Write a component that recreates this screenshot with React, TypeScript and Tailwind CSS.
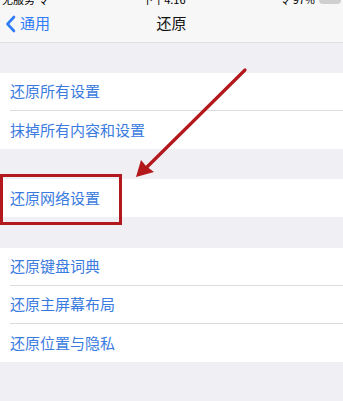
import React from "react";

const font = { fontFamily: '"Noto Sans CJK SC", "Noto Sans", sans-serif' };

const Row = ({ label, last }: { label: string; last?: boolean }) => (
  <div className="pl-[10px] bg-white">
    <div className={`h-[38px] flex items-center text-[15px] text-[#3a7be0] ${last ? "" : "border-b border-[#dcdce0]"}`}>
      {label}
    </div>
  </div>
);

export default function App() {
  return (
    <div className="relative w-[343px] h-[401px] overflow-hidden bg-[#efeff4]" style={font}>
      {/* status bar, cut at top */}
      <div className="h-[5px] overflow-hidden bg-[#f7f7f7] relative">
        <div className="flex justify-between items-end text-[11px] text-black leading-none -mt-[6px] px-[2px]">
          <span>无服务 令</span>
          <span>下午4:16</span>
          <span className="flex items-center gap-1">
            令 97%
            <span className="w-[22px] h-[9px] bg-[#cfcfcf] rounded-sm" />
          </span>
        </div>
      </div>
      {/* nav bar */}
      <div className="h-[38px] bg-[#f7f7f7] border-b border-[#e0e0e4] flex items-center relative">
        <div className="flex items-center pl-[5px] text-[#2f7cf6] text-[15px]">
          <svg width="11" height="18" viewBox="0 0 11 18" className="mr-[4px]">
            <path d="M9 2 L2.5 9 L9 16" fill="none" stroke="#2f7cf6" strokeWidth="2.6" strokeLinecap="round" strokeLinejoin="round" />
          </svg>
          通用
        </div>
        <div className="absolute left-0 right-0 text-center text-[15px] text-[#111] pointer-events-none">还原</div>
      </div>

      <div className="h-[30px]" />
      <Row label="还原所有设置" />
      <Row label="抹掉所有内容和设置" last />
      <div className="h-[30px]" />
      <Row label="还原网络设置" last />
      <div className="h-[31px]" />
      <Row label="还原键盘词典" />
      <Row label="还原主屏幕布局" />
      <Row label="还原位置与隐私" last />

      {/* red highlight box */}
      <div className="absolute left-0 top-[174px] w-[122px] h-[51px] border-[3px] border-[#b3191c]" />
      {/* arrow */}
      <svg className="absolute left-0 top-0" width="343" height="401" viewBox="0 0 343 401">
        <line x1="245" y1="70" x2="146" y2="168" stroke="#b3191c" strokeWidth="3.2" strokeLinecap="round" />
        <polygon points="136,177 141,160 146,166 154,172" fill="#b3191c" />
      </svg>
    </div>
  );
}
